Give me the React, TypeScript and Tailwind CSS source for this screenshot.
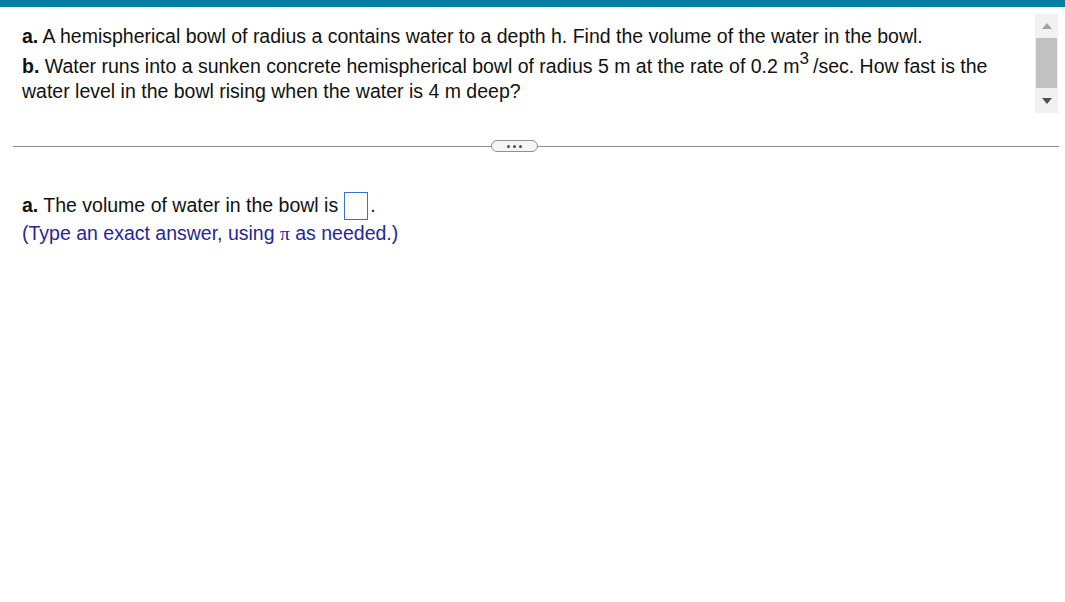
export default function App() {
  return (
    <div className="w-[1065px] h-[602px] bg-white overflow-hidden font-['Liberation_Sans',Arial,sans-serif] text-[19.5px] text-[#111]">
      {/* Top bar */}
      <div className="h-[7px] bg-[#007fa3]" />

      {/* Question + scrollbar */}
      <div className="flex pr-[7px]">
        <div className="flex-1 pl-[22px] pt-[17px] leading-[25px]">
          <p>
            <span className="font-bold">a.</span> A hemispherical bowl of radius a contains water to a depth h. Find the
            volume of the water in the bowl.
          </p>
          <p className="mt-[5px]">
            <span className="font-bold">b.</span> Water runs into a sunken concrete hemispherical bowl of radius 5 m at
            the rate of 0.2 m<sup className="text-[17px] top-[-0.55em]">3</sup>
            <span className="ml-[4px]">/sec. How fast is the water level in the bowl rising when the water is 4 m deep?</span>
          </p>
        </div>

        {/* Scrollbar */}
        <div className="w-[23px] mt-[7px] h-[99px] bg-[#f1f1f1] flex flex-col items-center">
          <div className="h-[24px] flex items-center justify-center">
            <svg width="10" height="6" viewBox="0 0 10 6">
              <path d="M5 0L10 6H0Z" fill="#a3a3a3" />
            </svg>
          </div>
          <div className="w-[21px] h-[50px] bg-[#c1c1c1]" />
          <div className="flex-1 flex items-center justify-center">
            <svg width="10" height="6" viewBox="0 0 10 6">
              <path d="M0 0H10L5 6Z" fill="#505050" />
            </svg>
          </div>
        </div>
      </div>

      {/* Divider with ellipsis */}
      <div className="relative ml-[13px] mr-[6px] mt-[27px] h-[12px] flex items-center">
        <div className="w-full h-px bg-[#8a9199]" />
        <button className="absolute left-[478px] top-0 w-[47px] h-[12px] rounded-full border border-[#8a9199] bg-[#f4f5f8] flex items-center justify-center gap-[3px]">
          <span className="w-[3px] h-[3px] rounded-full bg-[#4a4f55]" />
          <span className="w-[3px] h-[3px] rounded-full bg-[#4a4f55]" />
          <span className="w-[3px] h-[3px] rounded-full bg-[#4a4f55]" />
        </button>
      </div>

      {/* Answer */}
      <div className="pl-[22px] pt-[40px]">
        <div className="flex items-center h-[28px]">
          <span>
            <span className="font-bold">a.</span> The volume of water in the bowl is
          </span>
          <span className="ml-[6px] w-[24px] h-[28px] border border-[#3b6fd0] bg-white" />
          <span className="ml-[2px]">.</span>
        </div>
        <p className="leading-[26px] text-[#26269a]">
          (Type an exact answer, using <span className="font-['Liberation_Serif',serif]">π</span> as needed.)
        </p>
      </div>
    </div>
  )
}
